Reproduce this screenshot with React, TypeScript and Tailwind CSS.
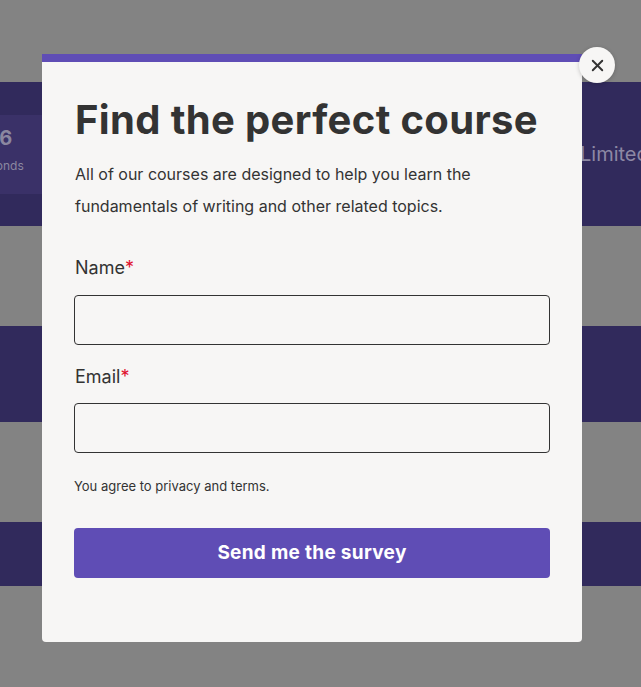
import { X } from 'lucide-react';

export default function App() {
  return (
    <div className="relative h-[687px] w-full overflow-hidden bg-[#838383] font-['Inter',sans-serif]">
      {/* page behind the overlay */}
      <div className="pt-[82px]">
        <div className="flex h-[144px] items-center bg-[#312a5c]">
          <div className="ml-[-42px] flex h-[79px] w-[86px] shrink-0 flex-col items-center bg-[#3a3168] pt-[11px] pr-[4px] text-[#8b87a0]">
            <span className="text-[20px] font-bold leading-6">46</span>
            <span className="mt-[8px] text-[12px] leading-4">Seconds</span>
          </div>
          <p className="ml-[536px] shrink-0 whitespace-nowrap text-[20px] text-[#8d88a4]">Limited time</p>
        </div>
        <div className="mt-[100px] h-[96px] bg-[#312a5c]" />
        <div className="mt-[100px] h-[64px] bg-[#312a5c]" />
      </div>

      {/* modal */}
      <div className="absolute left-[42px] top-[54px] w-[540px] rounded-b-[4px] border-t-8 border-[#5f4db5] bg-[#f7f6f5] px-8 pb-16 pt-[34px] text-[#333333]">
        <h1 className="ml-px text-[40px] font-bold leading-[48px] tracking-[0.35px]">Find the perfect course</h1>
        <p className="mt-[14px] ml-px pr-[60px] text-[16px] leading-8">
          All of our courses are designed to help you learn the fundamentals of writing and other related topics.
        </p>

        <label className="mt-[34px] ml-px block text-[18px] leading-6">
          Name<span className="text-[#e0102e]">*</span>
        </label>
        <input className="mt-[15px] block h-[50px] w-full rounded-[4px] border border-[#333333] bg-transparent" />

        <label className="mt-[20px] ml-px block text-[18px] leading-6">
          Email<span className="text-[#e0102e]">*</span>
        </label>
        <input className="mt-[14px] block h-[50px] w-full rounded-[4px] border border-[#333333] bg-transparent" />

        <p className="mt-[23px] text-[13px] leading-5">You agree to privacy and terms.</p>

        <button className="mt-[32px] flex h-[50px] w-full items-center justify-center rounded-[4px] bg-[#5f4db5] text-[19px] font-bold tracking-[0.3px] text-white">
          Send me the survey
        </button>

        <button className="absolute right-[-33px] top-[-15px] flex h-9 w-9 items-center justify-center rounded-full bg-[#f7f6f5] shadow-[0_1px_4px_rgba(0,0,0,0.2)]">
          <X className="h-[19px] w-[19px] text-[#333333]" strokeWidth={2.4} />
        </button>
      </div>
    </div>
  );
}
